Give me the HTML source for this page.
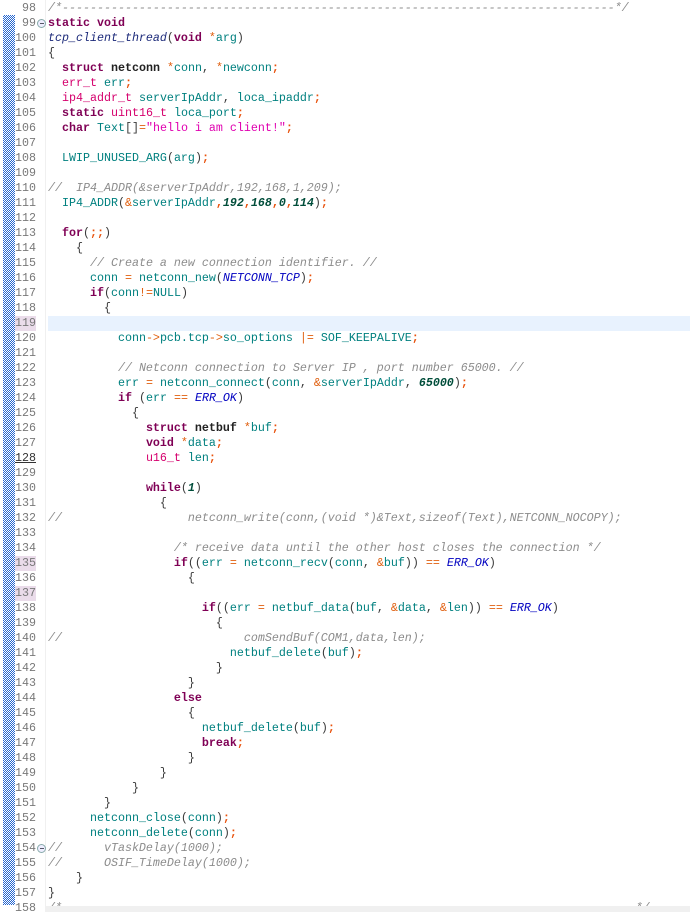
<!DOCTYPE html>
<html><head><meta charset="utf-8"><style>
html,body{margin:0;padding:0;background:#fff;width:690px;height:912px;overflow:hidden;position:relative}
.g{position:absolute;left:3px;top:15px;width:12px;height:890px;background-color:#fff;background-image:linear-gradient(45deg,#2466d0 25%,transparent 25%,transparent 75%,#2466d0 75%),linear-gradient(45deg,#2466d0 25%,transparent 25%,transparent 75%,#2466d0 75%);background-size:2px 2px;background-position:0 0,1px 1px}
.sep{position:absolute;left:45px;top:0;width:1px;height:912px;background:#f0f0f0}
.code{position:absolute;left:0;top:1px;width:690px;font-family:"Liberation Mono",monospace;font-size:11.67px;}
.l{height:15px;line-height:15px;white-space:pre;position:relative;width:690px}
.n{position:absolute;left:15px;width:21px;text-align:right;color:#787878}
.n.h{background:#eadcea}
.n.u{text-decoration:underline;color:#333}
.t{position:absolute;left:48px;color:#3a3a3a}
.hl{position:absolute;left:48px;width:642px;top:0;height:15px;background:#e8f2fe}
.k{color:#7f0055;font-weight:bold}
.y{color:#d5006d}
.v{color:#00807f}
.p{color:#e8500a;font-weight:bold}
.o{color:#e06010}
.c{color:#8c8c8c;font-style:italic}
.m{color:#0000c0;font-style:italic}
.d{color:#004d3a;font-weight:bold;font-style:italic}
.s{color:#e000b0}
.f{color:#1c2a7a;font-style:italic}
.b{color:#222;font-weight:bold}
.fold{position:absolute;left:37px;top:3px;width:7px;height:7px;border:1px solid #8aa;border-radius:50%;background:#eef;font-size:0}
.fold:after{content:"";position:absolute;left:2px;top:3px;width:4px;height:1px;background:#556}
.sb{position:absolute;left:46px;right:0;top:906px;height:6px;background:#f0f0f0}
</style></head><body>
<div class="g"></div>
<div class="sep"></div>
<div class="code">
<div class="l"><span class="n">98</span><span class="t"><span class="c">/*-------------------------------------------------------------------------------*/</span></span></div>
<div class="l"><span class="n">99</span><span class="fold"></span><span class="t"><span class="k">static void</span></span></div>
<div class="l"><span class="n">100</span><span class="t"><span class="f">tcp_client_thread</span>(<span class="k">void</span> <span class="o">*</span><span class="v">arg</span>)</span></div>
<div class="l"><span class="n">101</span><span class="t">{</span></div>
<div class="l"><span class="n">102</span><span class="t">  <span class="k">struct</span> <span class="b">netconn</span> <span class="o">*</span><span class="v">conn</span>, <span class="o">*</span><span class="v">newconn</span><span class="p">;</span></span></div>
<div class="l"><span class="n">103</span><span class="t">  <span class="y">err_t</span> <span class="v">err</span><span class="p">;</span></span></div>
<div class="l"><span class="n">104</span><span class="t">  <span class="y">ip4_addr_t</span> <span class="v">serverIpAddr</span>, <span class="v">loca_ipaddr</span><span class="p">;</span></span></div>
<div class="l"><span class="n">105</span><span class="t">  <span class="k">static</span> <span class="y">uint16_t</span> <span class="v">loca_port</span><span class="p">;</span></span></div>
<div class="l"><span class="n">106</span><span class="t">  <span class="k">char</span> <span class="v">Text</span>[]<span class="o">=</span><span class="s">"hello i am client!"</span><span class="p">;</span></span></div>
<div class="l"><span class="n">107</span></div>
<div class="l"><span class="n">108</span><span class="t">  <span class="v">LWIP_UNUSED_ARG</span>(<span class="v">arg</span>)<span class="p">;</span></span></div>
<div class="l"><span class="n">109</span></div>
<div class="l"><span class="n">110</span><span class="t"><span class="c">//  IP4_ADDR(&amp;serverIpAddr,192,168,1,209);</span></span></div>
<div class="l"><span class="n">111</span><span class="t">  <span class="v">IP4_ADDR</span>(<span class="o">&amp;</span><span class="v">serverIpAddr</span><span class="p">,</span><span class="d">192</span><span class="p">,</span><span class="d">168</span><span class="p">,</span><span class="d">0</span><span class="p">,</span><span class="d">114</span>)<span class="p">;</span></span></div>
<div class="l"><span class="n">112</span></div>
<div class="l"><span class="n">113</span><span class="t">  <span class="k">for</span>(<span class="p">;;</span>)</span></div>
<div class="l"><span class="n">114</span><span class="t">    {</span></div>
<div class="l"><span class="n">115</span><span class="t">      <span class="c">// Create a new connection identifier. //</span></span></div>
<div class="l"><span class="n">116</span><span class="t">      <span class="v">conn</span> <span class="o">=</span> <span class="v">netconn_new</span>(<span class="m">NETCONN_TCP</span>)<span class="p">;</span></span></div>
<div class="l"><span class="n">117</span><span class="t">      <span class="k">if</span>(<span class="v">conn</span><span class="o">!=</span><span class="v">NULL</span>)</span></div>
<div class="l"><span class="n">118</span><span class="t">        {</span></div>
<div class="l"><span class="hl"></span><span class="n h">119</span></div>
<div class="l"><span class="n">120</span><span class="t">          <span class="v">conn</span><span class="o">-&gt;</span><span class="v">pcb.tcp</span><span class="o">-&gt;</span><span class="v">so_options</span> <span class="o">|=</span> <span class="v">SOF_KEEPALIVE</span><span class="p">;</span></span></div>
<div class="l"><span class="n">121</span></div>
<div class="l"><span class="n">122</span><span class="t">          <span class="c">// Netconn connection to Server IP , port number 65000. //</span></span></div>
<div class="l"><span class="n">123</span><span class="t">          <span class="v">err</span> <span class="o">=</span> <span class="v">netconn_connect</span>(<span class="v">conn</span>, <span class="o">&amp;</span><span class="v">serverIpAddr</span>, <span class="d">65000</span>)<span class="p">;</span></span></div>
<div class="l"><span class="n">124</span><span class="t">          <span class="k">if</span> (<span class="v">err</span> <span class="o">==</span> <span class="m">ERR_OK</span>)</span></div>
<div class="l"><span class="n">125</span><span class="t">            {</span></div>
<div class="l"><span class="n">126</span><span class="t">              <span class="k">struct</span> <span class="b">netbuf</span> <span class="o">*</span><span class="v">buf</span><span class="p">;</span></span></div>
<div class="l"><span class="n">127</span><span class="t">              <span class="k">void</span> <span class="o">*</span><span class="v">data</span><span class="p">;</span></span></div>
<div class="l"><span class="n u">128</span><span class="t">              <span class="y">u16_t</span> <span class="v">len</span><span class="p">;</span></span></div>
<div class="l"><span class="n">129</span></div>
<div class="l"><span class="n">130</span><span class="t">              <span class="k">while</span>(<span class="d">1</span>)</span></div>
<div class="l"><span class="n">131</span><span class="t">                {</span></div>
<div class="l"><span class="n">132</span><span class="t"><span class="c">//                  netconn_write(conn,(void *)&amp;Text,sizeof(Text),NETCONN_NOCOPY);</span></span></div>
<div class="l"><span class="n">133</span></div>
<div class="l"><span class="n">134</span><span class="t">                  <span class="c">/* receive data until the other host closes the connection */</span></span></div>
<div class="l"><span class="n h">135</span><span class="t">                  <span class="k">if</span>((<span class="v">err</span> <span class="o">=</span> <span class="v">netconn_recv</span>(<span class="v">conn</span>, <span class="o">&amp;</span><span class="v">buf</span>)) <span class="o">==</span> <span class="m">ERR_OK</span>)</span></div>
<div class="l"><span class="n">136</span><span class="t">                    {</span></div>
<div class="l"><span class="n h">137</span></div>
<div class="l"><span class="n">138</span><span class="t">                      <span class="k">if</span>((<span class="v">err</span> <span class="o">=</span> <span class="v">netbuf_data</span>(<span class="v">buf</span>, <span class="o">&amp;</span><span class="v">data</span>, <span class="o">&amp;</span><span class="v">len</span>)) <span class="o">==</span> <span class="m">ERR_OK</span>)</span></div>
<div class="l"><span class="n">139</span><span class="t">                        {</span></div>
<div class="l"><span class="n">140</span><span class="t"><span class="c">//                          comSendBuf(COM1,data,len);</span></span></div>
<div class="l"><span class="n">141</span><span class="t">                          <span class="v">netbuf_delete</span>(<span class="v">buf</span>)<span class="p">;</span></span></div>
<div class="l"><span class="n">142</span><span class="t">                        }</span></div>
<div class="l"><span class="n">143</span><span class="t">                    }</span></div>
<div class="l"><span class="n">144</span><span class="t">                  <span class="k">else</span></span></div>
<div class="l"><span class="n">145</span><span class="t">                    {</span></div>
<div class="l"><span class="n">146</span><span class="t">                      <span class="v">netbuf_delete</span>(<span class="v">buf</span>)<span class="p">;</span></span></div>
<div class="l"><span class="n">147</span><span class="t">                      <span class="k">break</span><span class="p">;</span></span></div>
<div class="l"><span class="n">148</span><span class="t">                    }</span></div>
<div class="l"><span class="n">149</span><span class="t">                }</span></div>
<div class="l"><span class="n">150</span><span class="t">            }</span></div>
<div class="l"><span class="n">151</span><span class="t">        }</span></div>
<div class="l"><span class="n">152</span><span class="t">      <span class="v">netconn_close</span>(<span class="v">conn</span>)<span class="p">;</span></span></div>
<div class="l"><span class="n">153</span><span class="t">      <span class="v">netconn_delete</span>(<span class="v">conn</span>)<span class="p">;</span></span></div>
<div class="l"><span class="n">154</span><span class="fold"></span><span class="t"><span class="c">//      vTaskDelay(1000);</span></span></div>
<div class="l"><span class="n">155</span><span class="t"><span class="c">//      OSIF_TimeDelay(1000);</span></span></div>
<div class="l"><span class="n">156</span><span class="t">    }</span></div>
<div class="l"><span class="n">157</span><span class="t">}</span></div>
<div class="l"><span class="n">158</span><span class="t"><span class="c">/*                                                                                  */</span></span></div>
</div>
<div class="sb"></div>
</body></html>
